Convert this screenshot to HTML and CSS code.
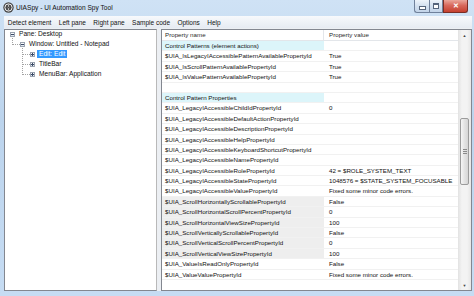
FILE: index.html
```html
<!DOCTYPE html>
<html lang="en">
<head>
  <meta charset="UTF-8" />
  <title>UIASpy - UI Automation Spy Tool</title>
  <link rel="stylesheet" href="styles.css">
</head>
<body>
  <div class="window">
    <div class="titlebar">
      <svg class="app-icon" width="11" height="11" viewBox="0 0 11 11">
        <circle cx="5.5" cy="5.5" r="5.2" fill="#4a4a4a"/>
        <circle cx="5.5" cy="5.5" r="3.6" fill="none" stroke="#f2f2f2" stroke-width="1"/>
        <path d="M5.5 1.9 L6.3 5.5 L5.5 9.1 L4.7 5.5 Z" fill="#f2f2f2"/>
        <circle cx="5.5" cy="5.5" r="1" fill="#4a4a4a"/>
      </svg>
      <span class="title">UIASpy - UI Automation Spy Tool</span>
      <div class="caption-btns">
        <span class="cap min"><i></i></span>
        <span class="cap max"><i></i></span>
        <span class="cap close">&#x2715;</span>
      </div>
    </div>

    <div class="client">
      <div class="menubar">
        <span>Detect element</span>
        <span>Left pane</span>
        <span>Right pane</span>
        <span>Sample code</span>
        <span>Options</span>
        <span>Help</span>
      </div>

      <div class="panes">
        <!-- element tree -->
        <div class="pane tree-pane">
          <ul class="tree">
            <li class="lvl0"><span class="exp open"></span><span class="label">Pane: Desktop</span></li>
            <li class="lvl1"><span class="exp open"></span><span class="label">Window: Untitled - Notepad</span></li>
            <li class="lvl2"><span class="exp"></span><span class="label selected">Edit: Edit</span></li>
            <li class="lvl2"><span class="exp"></span><span class="label">TitleBar</span></li>
            <li class="lvl2"><span class="exp"></span><span class="label">MenuBar: Application</span></li>
          </ul>
        </div>

        <!-- property list -->
        <div class="pane list-pane">
          <div class="list">
            <div class="head"><span class="c-name">Property name</span><span class="c-val">Property value</span></div>
            <div class="row sect"><span class="c-name">Control Patterns (element actions)</span><span class="c-val"></span></div>
            <div class="row"><span class="c-name">$UIA_IsLegacyIAccessiblePatternAvailablePropertyId</span><span class="c-val">True</span></div>
            <div class="row"><span class="c-name">$UIA_IsScrollPatternAvailablePropertyId</span><span class="c-val">True</span></div>
            <div class="row"><span class="c-name">$UIA_IsValuePatternAvailablePropertyId</span><span class="c-val">True</span></div>
            <div class="row"><span class="c-name"></span><span class="c-val"></span></div>
            <div class="row sect"><span class="c-name">Control Pattern Properties</span><span class="c-val"></span></div>
            <div class="row"><span class="c-name">$UIA_LegacyIAccessibleChildIdPropertyId</span><span class="c-val">0</span></div>
            <div class="row"><span class="c-name">$UIA_LegacyIAccessibleDefaultActionPropertyId</span><span class="c-val"></span></div>
            <div class="row"><span class="c-name">$UIA_LegacyIAccessibleDescriptionPropertyId</span><span class="c-val"></span></div>
            <div class="row"><span class="c-name">$UIA_LegacyIAccessibleHelpPropertyId</span><span class="c-val"></span></div>
            <div class="row"><span class="c-name">$UIA_LegacyIAccessibleKeyboardShortcutPropertyId</span><span class="c-val"></span></div>
            <div class="row"><span class="c-name">$UIA_LegacyIAccessibleNamePropertyId</span><span class="c-val"></span></div>
            <div class="row"><span class="c-name">$UIA_LegacyIAccessibleRolePropertyId</span><span class="c-val">42 = $ROLE_SYSTEM_TEXT</span></div>
            <div class="row"><span class="c-name">$UIA_LegacyIAccessibleStatePropertyId</span><span class="c-val">1048576 = $STATE_SYSTEM_FOCUSABLE</span></div>
            <div class="row"><span class="c-name">$UIA_LegacyIAccessibleValuePropertyId</span><span class="c-val">Fixed some minor code errors.</span></div>
            <div class="row shade"><span class="c-name">$UIA_ScrollHorizontallyScrollablePropertyId</span><span class="c-val">False</span></div>
            <div class="row shade"><span class="c-name">$UIA_ScrollHorizontalScrollPercentPropertyId</span><span class="c-val">0</span></div>
            <div class="row shade"><span class="c-name">$UIA_ScrollHorizontalViewSizePropertyId</span><span class="c-val">100</span></div>
            <div class="row shade"><span class="c-name">$UIA_ScrollVerticallyScrollablePropertyId</span><span class="c-val">False</span></div>
            <div class="row shade"><span class="c-name">$UIA_ScrollVerticalScrollPercentPropertyId</span><span class="c-val">0</span></div>
            <div class="row shade"><span class="c-name">$UIA_ScrollVerticalViewSizePropertyId</span><span class="c-val">100</span></div>
            <div class="row"><span class="c-name">$UIA_ValueIsReadOnlyPropertyId</span><span class="c-val">False</span></div>
            <div class="row"><span class="c-name">$UIA_ValueValuePropertyId</span><span class="c-val">Fixed some minor code errors.</span></div>
          </div>
          <div class="vscroll">
            <span class="arrow">&#x25B2;</span>
            <div class="track">
              <div class="thumb"><i></i><i></i><i></i></div>
            </div>
            <span class="arrow">&#x25BC;</span>
          </div>
        </div>
      </div>
    </div>
  </div>
</body>
</html>
```

FILE: styles.css
```css
body {
  margin: 0;
  font-family: "Liberation Sans", Arial, sans-serif;
  color: #111;
}
.window {
  width: 474px;
  height: 296px;
  display: flex;
  flex-direction: column;
  background: linear-gradient(#cfe2f5, #bcd4ed 40%, #c6dcf3);
}

/* title bar */
.titlebar {
  height: 16px;
  display: flex;
  align-items: center;
  padding-left: 3px;
  flex-shrink: 0;
}
.app-icon {
  margin-top: -2px;
}
.title {
  margin-left: 2px;
  font-size: 6.6px;
  margin-top: -2px;
}
.caption-btns {
  margin-left: auto;
  margin-right: 6px;
  align-self: flex-start;
  display: flex;
}
.cap {
  height: 13px;
  box-sizing: border-box;
  border: 1px solid #70819b;
  border-top: none;
  background: linear-gradient(#eef4fb, #d3e0ef 50%, #c3d4e9);
  display: flex;
  align-items: center;
  justify-content: center;
}
.cap.min {
  width: 15px;
  border-radius: 0 0 0 3px;
  border-right: none;
}
.cap.min i {
  width: 5px;
  height: 2px;
  margin-top: 4px;
  background: #fff;
  border: 1px solid #56657c;
}
.cap.max {
  width: 14px;
}
.cap.max i {
  width: 4px;
  height: 3px;
  border: 1px solid #56657c;
  border-top-width: 2px;
  background: #fff;
}
.cap.close {
  width: 25px;
  border-color: #7a2d25;
  border-radius: 0 0 3px 0;
  background: linear-gradient(#eaa69b, #d8685c 45%, #c5402f);
  color: #fff;
  font-size: 7px;
  font-weight: bold;
}

/* client area */
.client {
  flex: 1;
  display: flex;
  flex-direction: column;
  margin: 0 2px 5px 4px;
  background: #eceff3;
}
.menubar {
  height: 12px;
  display: flex;
  align-items: center;
  font-size: 6.5px;
  background: linear-gradient(#f7f9fc, #e6ebf2);
  margin-bottom: 1px;
}
.menubar span {
  padding: 0 3.7px;
}
.panes {
  flex: 1;
  display: flex;
  gap: 4px;
}
.pane {
  border: 1px solid #838790;
  background: #fff;
}

/* tree */
.tree-pane {
  width: 153px;
  box-sizing: border-box;
  border-right-color: #b9b9b9;
}
.tree {
  list-style: none;
  margin: 0;
  padding: 0;
  font-size: 6.6px;
}
.tree li {
  height: 10px;
  display: flex;
  align-items: flex-start;
  position: relative;
}
.tree .lvl0 { padding-left: 5px; }
.tree .lvl1 { padding-left: 15px; }
.tree .lvl2 { padding-left: 25px; }

/* dotted connector from the parent's box */
.tree .lvl1::before,
.tree .lvl2::before {
  content: "";
  position: absolute;
  top: -6px;
  height: 10px;
  border-left: 1px dotted #a3a3a3;
  border-bottom: 1px dotted #a3a3a3;
}
.tree .lvl1::before { left: 7px; width: 7px; }
.tree .lvl2::before { left: 17px; width: 7px; }

.exp {
  width: 5px;
  height: 5px;
  margin-top: 1.5px;
  margin-right: 2px;
  box-sizing: border-box;
  border: 1px solid #9aa3b0;
  background: linear-gradient(#fff, #dfe6ef);
  display: flex;
  align-items: center;
  justify-content: center;
  position: relative;
  z-index: 1;
}
.exp::before {
  content: "";
  width: 3px;
  height: 1px;
  background: #3a4a66;
}
.exp:not(.open)::after {
  content: "";
  position: absolute;
  width: 1px;
  height: 3px;
  background: #3a4a66;
}
.label {
  padding: 0 2px;
  line-height: 8px;
}
.label.selected {
  background: #3399ff;
  color: #fff;
}

/* property list */
.list-pane {
  flex: 1;
  display: flex;
}
.list {
  flex: 1;
  font-size: 6.2px;
}
.head,
.row {
  display: grid;
  grid-template-columns: 162px 1fr;
  box-sizing: border-box;
}
.head {
  height: 11px;
  line-height: 10px;
  border-bottom: 1px solid #e3e6ea;
  color: #2a2a2a;
}
.head .c-name {
  border-right: 1px solid #e3e6ea;
}
.row {
  height: 10.4px;
  line-height: 10px;
  border-bottom: 1px solid #f1f1f1;
}
.c-name {
  padding-left: 3px;
  white-space: nowrap;
  overflow: hidden;
}
.c-val {
  padding-left: 5px;
  white-space: nowrap;
  overflow: hidden;
}
.row.sect .c-name {
  background: #dcf5fa;
}
.row.shade .c-name {
  background: #eeeeee;
}

/* scrollbar */
.vscroll {
  width: 13px;
  display: flex;
  flex-direction: column;
  background: linear-gradient(to right, #e2e2e2, #f3f3f3 30%, #f3f3f3 70%, #e6e6e6);
}
.arrow {
  height: 10px;
  font-size: 4px;
  color: #444;
  display: flex;
  align-items: center;
  justify-content: center;
}
.track {
  flex: 1;
}
.thumb {
  margin: 78px 2px 0;
  height: 67px;
  box-sizing: border-box;
  border: 1px solid #9b9b9b;
  border-radius: 2px;
  background: linear-gradient(to right, #f6f6f6, #e3e3e3 50%, #d6d6d6);
  display: flex;
  flex-direction: column;
  align-items: center;
  justify-content: center;
  gap: 1px;
}
.thumb i {
  width: 4px;
  height: 1px;
  background: #8a8a8a;
}
```
